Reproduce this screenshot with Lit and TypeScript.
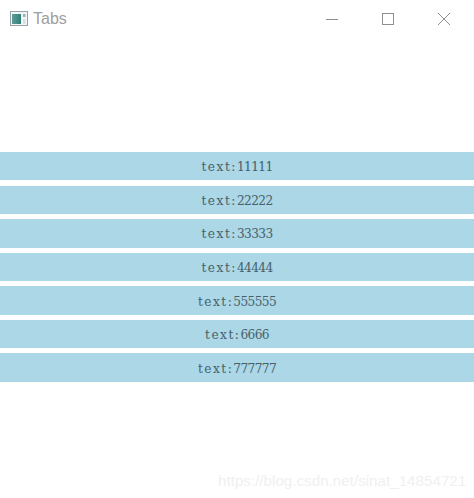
import { LitElement, html, css } from "lit";
import { customElement } from "lit/decorators.js";

const ROWS = ["11111", "22222", "33333", "44444", "555555", "6666", "777777"];

@customElement("app-root")
export class AppRoot extends LitElement {
  static styles = css`
    :host { display: block; width: 474px; height: 498px; background: #fff; position: relative; overflow: hidden; }
    .titlebar { height: 37px; display: flex; align-items: center; padding-left: 10px; }
    .app-icon { width: 18px; height: 15px; display: block; flex: none; }
    .title { margin-left: 5px; font: 16px "Liberation Sans", sans-serif; color: #9e9e9e; }
    .controls { margin-left: auto; padding-right: 2px; display: flex; }
    .ctl { width: 56px; height: 37px; display: flex; align-items: center; justify-content: center; }
    .ctl svg { width: 14px; height: 14px; display: block; }
    .list { margin-top: 115px; display: flex; flex-direction: column; gap: 5.2px; }
    .row { height: 28.4px; background: #abd7e6; display: flex; align-items: center; justify-content: center;
      font-family: "DejaVu Serif", "Liberation Serif", serif; font-stretch: condensed; font-size: 13.5px; color: #47606c; white-space: pre; }
    .label { letter-spacing: 1.5px; }
    .value { letter-spacing: -0.6px; }
    .watermark { position: absolute; left: 218px; top: 472px; font: 15.2px "Liberation Sans", sans-serif; color: #f0f0f0; white-space: nowrap; }
  `;

  render() {
    return html`
      <div class="titlebar">
        <svg class="app-icon" viewBox="0 0 18 15">
          <defs>
            <linearGradient id="tile" x1="0" y1="0" x2="1" y2="0">
              <stop offset="0" stop-color="#5f9c9a"/>
              <stop offset="1" stop-color="#2f7f74"/>
            </linearGradient>
          </defs>
          <rect x="0.5" y="0.5" width="17" height="14" fill="#f1f5f5" stroke="#98a2a6"/>
          <rect x="2" y="3" width="9" height="10" fill="url(#tile)"/>
          <rect x="13" y="3" width="2.5" height="3" fill="#9fb0b2"/>
          <rect x="13" y="8" width="2.5" height="5" fill="#d5dfe0"/>
        </svg>
        <span class="title">Tabs</span>
        <div class="controls">
          <div class="ctl"><svg viewBox="0 0 14 14"><path d="M1 7.5H13" stroke="#8f8f8f" fill="none"/></svg></div>
          <div class="ctl"><svg viewBox="0 0 14 14"><rect x="1.5" y="1.5" width="11" height="11" stroke="#8f8f8f" fill="none"/></svg></div>
          <div class="ctl"><svg viewBox="0 0 14 14"><path d="M1 1L13 13M13 1L1 13" stroke="#8f8f8f" fill="none"/></svg></div>
        </div>
      </div>
      <div class="list">
        ${ROWS.map((r) => html`<div class="row"><span class="label">text:</span><span class="value">${r}</span></div>`)}
      </div>
      <div class="watermark">https://blog.csdn.net/sinat_14854721</div>
    `;
  }
}
